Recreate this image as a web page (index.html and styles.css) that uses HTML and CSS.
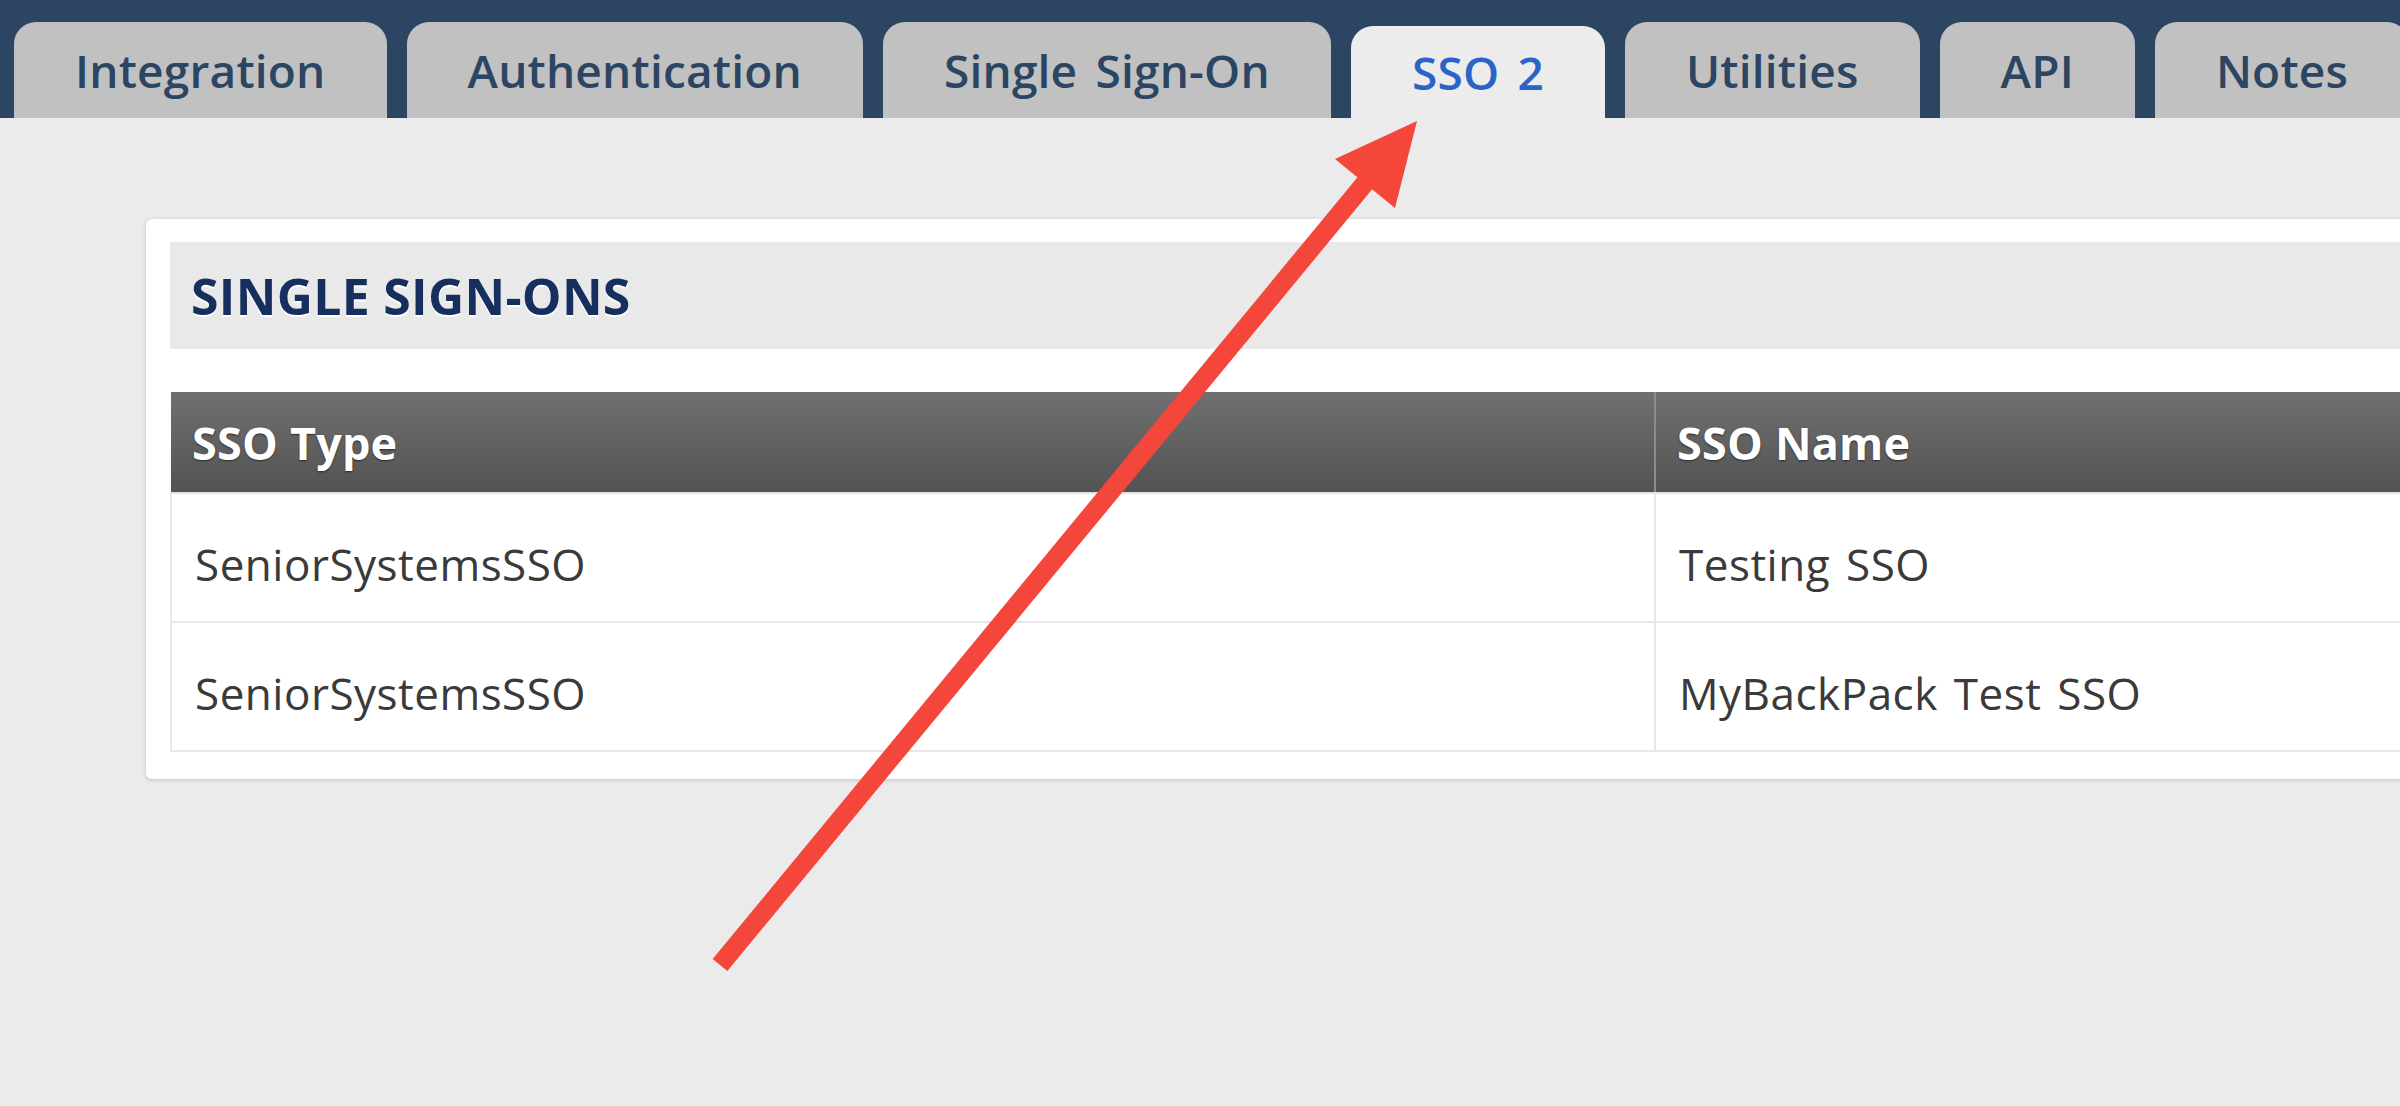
FILE: index.html
```html
<!DOCTYPE html>
<html lang="en">
<head>
<meta charset="utf-8">
<title>Single Sign-Ons</title>
<link rel="stylesheet" href="styles.css">
</head>
<body>
<nav class="tabbar">
  <a class="tab">Integration</a>
  <a class="tab">Authentication</a>
  <a class="tab">Single Sign-On</a>
  <a class="tab tab-active">SSO 2</a>
  <a class="tab">Utilities</a>
  <a class="tab">API</a>
  <a class="tab">Notes</a>
</nav>
<main class="content">
  <section class="card">
    <h2 class="section-title">SINGLE SIGN-ONS</h2>
    <table class="sso-table">
      <colgroup>
        <col class="col-type">
        <col class="col-name">
      </colgroup>
      <thead>
        <tr><th>SSO Type</th><th>SSO Name</th></tr>
      </thead>
      <tbody>
        <tr><td>SeniorSystemsSSO</td><td>Testing SSO</td></tr>
        <tr><td>SeniorSystemsSSO</td><td>MyBackPack Test SSO</td></tr>
      </tbody>
    </table>
  </section>
</main>
<svg class="annotation" width="2400" height="1106" viewBox="0 0 2400 1106" aria-hidden="true">
  <line x1="720" y1="965" x2="1370" y2="177" stroke="#f4463a" stroke-width="19" stroke-linecap="butt"/>
  <polygon points="1417,121 1335,159 1395,208" fill="#f4463a"/>
</svg>
</body>
</html>
```

FILE: styles.css
```css
html, body {
  margin: 0;
  padding: 0;
  overflow: hidden;
}
body {
  width: 2400px;
  height: 1106px;
  background: #ebebeb;
  font-family: "Open Sans", "Noto Sans", sans-serif;
  position: relative;
}
.tabbar {
  display: flex;
  align-items: flex-end;
  gap: 20px;
  height: 118px;
  padding-left: 14px;
  background: #2c4562;
  box-sizing: border-box;
  overflow: hidden;
}
.tab {
  flex-shrink: 0;
  display: flex;
  align-items: center;
  height: 96px;
  padding: 0 61px;
  background: #c1c1c1;
  border-radius: 22px 22px 0 0;
  color: #2c4563;
  font-weight: 600;
  font-size: 46px;
  letter-spacing: 0.2px;
  word-spacing: 6px;
  white-space: nowrap;
}
.tab-active {
  height: 92px;
  background: #ececec;
  color: #2b63c8;
}
.content {
  padding: 101px 0 0 146px;
}
.card {
  width: 2400px;
  background: #ffffff;
  border-radius: 6px;
  box-shadow: 0 1px 4px rgba(0, 0, 0, 0.18);
  padding: 23px 0 27px 24px;
  box-sizing: border-box;
}
.section-title {
  margin: 0 0 43px 0;
  height: 107px;
  display: flex;
  align-items: center;
  padding-left: 21px;
  background: #e9e9e9;
  color: #172f5e;
  font-size: 50px;
  font-weight: 700;
  letter-spacing: 0.3px;
  text-shadow: 0 2px 0 #ffffff;
}
.sso-table {
  width: 100%;
  border-collapse: collapse;
  table-layout: fixed;
}
.col-type {
  width: 1484px;
}
.sso-table th {
  height: 101px;
  padding: 0 0 0 21px;
  text-align: left;
  background: linear-gradient(#707070, #535353);
  color: #ffffff;
  font-size: 45px;
  font-weight: 700;
  letter-spacing: 0.2px;
  text-shadow: 0 1px 2px rgba(0, 0, 0, 0.55);
  border-right: 2px solid #8c8c8c;
  border-bottom: 2px solid #e3e3e3;
  box-sizing: border-box;
}
.sso-table td {
  height: 129px;
  padding: 12px 0 0 23px;
  border: 2px solid #e7e7e7;
  color: #3a3a3a;
  font-size: 44px;
  font-weight: 400;
  letter-spacing: 0.5px;
  word-spacing: 4px;
  box-sizing: border-box;
}
.annotation {
  position: absolute;
  top: 0;
  left: 0;
  pointer-events: none;
}
```
